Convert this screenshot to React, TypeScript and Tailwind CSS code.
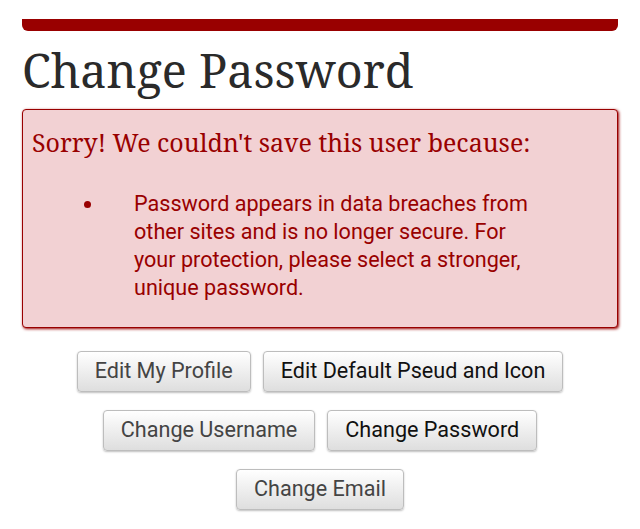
import React from "react";

const serif = { fontFamily: '"Noto Serif", "DejaVu Serif", "Liberation Serif", serif' };

function Btn({ children, dark }: { children: React.ReactNode; dark?: boolean }) {
  return (
    <a
      href="#"
      className={
        "inline-flex h-[41px] items-center rounded-[4px] border border-[#bdbdbd] bg-gradient-to-b from-white to-[#dedede] px-[17px] text-[21.6px] shadow-[0_1px_2px_rgba(0,0,0,0.25)] " +
        (dark ? "text-[#111111]" : "text-[#444444]")
      }
    >
      {children}
    </a>
  );
}

export default function App() {
  return (
    <div className="min-h-[529px] bg-white font-['Roboto',sans-serif]">
      <div className="mx-[22px] pt-[19px]">
        <div className="h-[12px] rounded-b-[6px] bg-[#990000]" />
        <h2 className="mt-[11px] text-[46.7px] leading-[56px] text-[#2a2a2a]" style={serif}>
          Change Password
        </h2>
        <div className="mt-[11px] rounded-[4px] border border-[#990000] bg-[#f2d1d3] pb-[25px] shadow-[1px_1px_3px_#990000]">
          <h4 className="px-[9px] pt-[16px] text-[25px] leading-[32px] text-[#990000]" style={serif}>
            Sorry! We couldn't save this user because:
          </h4>
          <ul className="mt-[32px] list-disc pl-[81px] pr-[77px] text-[21.6px] leading-[28px] text-[#990000] marker:text-[#990000]">
            <li className="pl-[30px]">
              Password appears in data breaches from other sites and is no longer secure. For your protection, please select a stronger, unique password.
            </li>
          </ul>
        </div>
        <div className="mt-[23px] flex flex-col items-center gap-[18px]">
          <div className="flex justify-center gap-[12px]">
            <Btn>Edit My Profile</Btn>
            <Btn dark>Edit Default Pseud and Icon</Btn>
          </div>
          <div className="flex justify-center gap-[12px]">
            <Btn>Change Username</Btn>
            <Btn dark>Change Password</Btn>
          </div>
          <div className="flex justify-center gap-[12px]">
            <Btn>Change Email</Btn>
          </div>
        </div>
      </div>
    </div>
  );
}
